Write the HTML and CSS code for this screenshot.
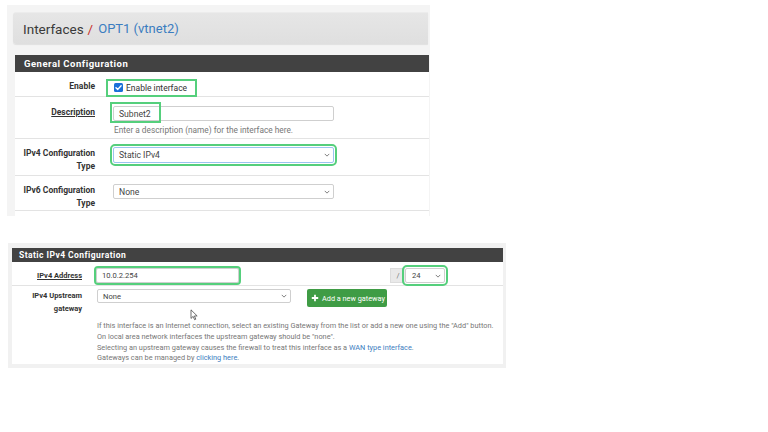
FILE: index.html
```html
<!DOCTYPE html>
<html lang="en">
<head>
<meta charset="utf-8">
<title>Interfaces / OPT1 (vtnet2)</title>
<link rel="stylesheet" href="styles.css">
</head>
<body>
<div class="page">
  <div class="shot shot-top">
    <div class="crumb">
      <span class="crumb-root">Interfaces</span><span class="crumb-sep">/</span><span class="crumb-cur">OPT1 (vtnet2)</span>
    </div>
    <div class="panel panel-top">
      <div class="panel-head">General Configuration</div>
      <div class="row row-enable">
        <div class="lbl lbl-mid">Enable</div>
        <div class="ctl">
          <label class="hl-enable">
            <span class="check"><svg viewBox="0 0 10 10" width="9" height="9"><path d="M2.2 5.2 L4.2 7.1 L7.9 3" fill="none" stroke="#fff" stroke-width="1.6" stroke-linecap="round" stroke-linejoin="round"/></svg></span>
            <span>Enable interface</span>
          </label>
        </div>
      </div>
      <div class="row row-desc">
        <div class="lbl lbl-u">Description</div>
        <div class="ctl">
          <div class="field field-desc">Subnet2<span class="hl-over"></span></div>
          <div class="help help-top">Enter a description (name) for the interface here.</div>
        </div>
      </div>
      <div class="row row-v4">
        <div class="lbl">IPv4 Configuration<br>Type</div>
        <div class="ctl">
          <div class="field select select-wide focus hl">Static IPv4<svg class="chev" viewBox="0 0 8 5" width="6" height="4"><path d="M1 1 L4 4 L7 1" fill="none" stroke="#666" stroke-width="1.1"/></svg></div>
        </div>
      </div>
      <div class="row row-v6">
        <div class="lbl">IPv6 Configuration<br>Type</div>
        <div class="ctl">
          <div class="field select select-wide">None<svg class="chev" viewBox="0 0 8 5" width="6" height="4"><path d="M1 1 L4 4 L7 1" fill="none" stroke="#666" stroke-width="1.1"/></svg></div>
        </div>
      </div>
    </div>
  </div>

  <div class="shot shot-bottom">
    <div class="panel panel-bottom">
      <div class="panel-head panel-head-sm">Static IPv4 Configuration</div>
      <div class="row2 row-addr">
        <div class="lbl2 lbl-u lbl-mid2">IPv4 Address</div>
        <div class="ctl2 ctl-addr">
          <div class="field2 field-addr hl0">10.0.2.254</div>
          <div class="addon">/</div>
          <div class="field2 select2 select-mask focus hl">24<svg class="chev" viewBox="0 0 8 5" width="6" height="4"><path d="M1 1 L4 4 L7 1" fill="none" stroke="#666" stroke-width="1.1"/></svg></div>
        </div>
      </div>
      <div class="row2 row-gw">
        <div class="lbl2">IPv4 Upstream<br>gateway</div>
        <div class="ctl2">
          <div class="gw-line">
            <div class="field2 select2 select-gw">None<svg class="chev" viewBox="0 0 8 5" width="6" height="4"><path d="M1 1 L4 4 L7 1" fill="none" stroke="#666" stroke-width="1.1"/></svg></div>
            <div class="btn-add"><svg viewBox="0 0 10 10" width="8" height="8"><path d="M5 1 V9 M1 5 H9" stroke="#fff" stroke-width="2.2"/></svg><span>Add a new gateway</span></div>
          </div>
          <div class="help help-bottom">
            <div>If this interface is an Internet connection, select an existing Gateway from the list or add a new one using the "Add" button.</div>
            <div>On local area network interfaces the upstream gateway should be "none".</div>
            <div>Selecting an upstream gateway causes the firewall to treat this interface as a <span class="link">WAN type interface</span>.</div>
            <div>Gateways can be managed by <span class="link">clicking here</span>.</div>
          </div>
        </div>
      </div>
    </div>
    <svg class="cursor" viewBox="0 0 9 14" width="8" height="12"><path d="M1 1 L1 11 L3.5 8.6 L5.2 12.5 L6.6 11.9 L5 8.1 L8.2 8.1 Z" fill="#fff" stroke="#444" stroke-width="0.9" stroke-linejoin="round"/></svg>
  </div>
</div>
</body>
</html>
```

FILE: styles.css
```css
html, body {
  margin: 0;
  padding: 0;
  background: #fff;
}
body {
  font-family: Roboto, "Liberation Sans", sans-serif;
  color: #333;
}
.page {
  padding: 5px 0 0 7px;
}
.shot {
  box-sizing: border-box;
  background: #f4f4f4;
}
.shot-top {
  width: 423px;
  height: 211px;
  padding: 7px 1px 0 6px;
  display: flex;
  flex-direction: column;
}
.crumb {
  height: 32px;
  margin-right: 1px;
  box-sizing: border-box;
  background: linear-gradient(#e6e6e6, #dfdfdf);
  border-top: 1px solid #ececec;
  border-radius: 3px 0 0 3px;
  box-shadow: 0 1px 1px rgba(0,0,0,0.08);
  display: flex;
  align-items: center;
  padding-left: 10px;
  font-size: 13.5px;
  color: #3a3a3a;
}
.crumb-sep {
  color: #c8302a;
  margin: 0 5px 0 4px;
}
.crumb-cur {
  color: #3b7dc0;
  font-size: 13px;
}
.panel {
  background: #fff;
}
.panel-top {
  margin: 11px 0 0 2px;
  flex: 1;
}
.panel-head {
  height: 17px;
  line-height: 17px;
  background: #424242;
  color: #fff;
  font-weight: 700;
  font-size: 9.5px;
  letter-spacing: 0.5px;
  padding-left: 9px;
}
.row {
  display: grid;
  grid-template-columns: 80px 1fr;
  column-gap: 18px;
  box-sizing: border-box;
  border-bottom: 1px solid #e3e3e3;
}
.lbl {
  text-align: right;
  font-weight: 700;
  font-size: 8.5px;
  line-height: 13px;
  color: #333;
}
.lbl-u {
  text-decoration: underline;
  text-underline-offset: 1px;
}
.row-enable {
  height: 25px;
  padding-top: 5px;
}
.lbl-mid {
  line-height: 19px;
}
.hl-enable {
  display: inline-flex;
  align-items: center;
  gap: 3px;
  height: 18px;
  box-sizing: border-box;
  margin-left: -7px;
  padding: 0 8px 0 6px;
  border: 2px solid #55cf7c;
  font-size: 8.5px;
  color: #333;
}
.check {
  width: 9px;
  height: 9px;
  border-radius: 1.5px;
  background: #1b6fd8;
  display: flex;
}
.row-desc {
  height: 42px;
  padding-top: 9px;
}
.row-desc .lbl {
  line-height: 13px;
}
.field {
  position: relative;
  box-sizing: border-box;
  width: 221px;
  border: 1px solid #cfcfcf;
  border-radius: 2px;
  background: #fff;
  font-size: 8.6px;
  color: #444;
  padding-left: 5px;
  display: flex;
  align-items: center;
}
.field-desc {
  height: 15px;
}
.hl-over {
  position: absolute;
  left: -4px;
  top: -5px;
  width: 51px;
  height: 21px;
  box-sizing: border-box;
  border: 2px solid #55cf7c;
}
.help {
  color: #777;
}
.help-top {
  font-size: 8.3px;
  line-height: 12px;
  margin-top: 3px;
  padding-left: 1px;
}
.row-v4 {
  height: 37px;
  padding-top: 8px;
}
.row-v6 {
  height: 35px;
  padding-top: 8px;
}
.select-wide {
  height: 16px;
}
.row-v6 .select-wide {
  height: 15px;
}
.select .chev, .select2 .chev {
  margin-left: auto;
  margin-right: 3px;
}
.focus {
  border-color: #9cc3f0;
}
.hl {
  outline: 2px solid #55cf7c;
  outline-offset: 1px;
}
.hl0 {
  outline: 2px solid #55cf7c;
  outline-offset: 0;
}

/* bottom screenshot */
.shot-bottom {
  position: relative;
  width: 498px;
  height: 125px;
  margin: 27px 0 0 1px;
  padding: 5px 3px 4px 4px;
  background: #f1f1f1;
  display: flex;
  flex-direction: column;
}
.panel-bottom {
  flex: 1;
  display: flex;
  flex-direction: column;
}
.panel-head-sm {
  height: 14px;
  line-height: 14px;
  font-size: 8.5px;
  letter-spacing: 0.45px;
  padding-left: 7px;
}
.row2 {
  display: grid;
  grid-template-columns: 70px 1fr;
  column-gap: 15px;
  box-sizing: border-box;
}
.lbl2 {
  text-align: right;
  font-weight: 700;
  font-size: 7.5px;
  line-height: 13px;
  color: #333;
}
.lbl-mid2 {
  line-height: 15px;
}
.row-addr {
  height: 24px;
  padding-top: 6px;
  border-bottom: 1px solid #e3e3e3;
}
.ctl-addr {
  display: flex;
  align-items: flex-start;
}
.field2 {
  box-sizing: border-box;
  height: 15px;
  border: 1px solid #cfcfcf;
  border-radius: 2px;
  background: #fff;
  font-size: 7.6px;
  color: #444;
  padding-left: 5px;
  display: flex;
  align-items: center;
}
.field-addr {
  width: 143px;
  margin-left: -1px;
}
.addon {
  box-sizing: border-box;
  width: 15px;
  height: 15px;
  margin-left: 151px;
  background: #e9e9e9;
  border: 1px solid #dcdcdc;
  border-right: 0;
  font-size: 7.5px;
  color: #777;
  display: flex;
  align-items: center;
  justify-content: center;
}
.select-mask {
  width: 40px;
  padding-left: 6px;
}
.row-gw {
  flex: 1;
  padding-top: 3px;
}
.gw-line {
  display: flex;
  align-items: flex-start;
  gap: 16px;
}
.select-gw {
  width: 194px;
  height: 14px;
}
.btn-add {
  box-sizing: border-box;
  width: 80px;
  height: 18px;
  background: #3f9c45;
  border-radius: 2px;
  color: #fff;
  font-size: 7.3px;
  display: flex;
  align-items: center;
  gap: 3px;
  padding-left: 4px;
}
.help-bottom {
  margin-top: 14px;
  font-size: 7.35px;
  line-height: 10.8px;
  color: #777;
  white-space: nowrap;
}
.link {
  color: #3b7dc0;
}
.cursor {
  position: absolute;
  left: 182px;
  top: 66px;
}
```
